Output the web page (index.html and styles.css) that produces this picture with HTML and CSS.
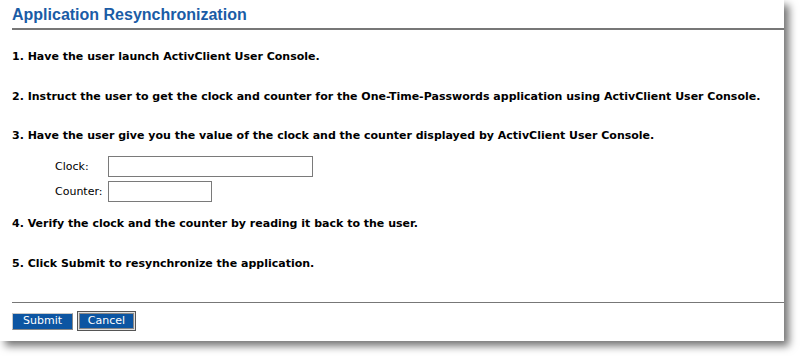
FILE: index.html
```html
<!DOCTYPE html>
<html>
<head>
<meta charset="utf-8">
<link rel="stylesheet" href="styles.css">
</head>
<body>
<div class="panel">
  <h1 class="title">Application Resynchronization</h1>
  <div class="content">
    <p class="step s1">1. Have the user launch ActivClient User Console.</p>
    <p class="step s2">2. Instruct the user to get the clock and counter for the One-Time-Passwords application using ActivClient User Console.</p>
    <p class="step s3">3. Have the user give you the value of the clock and the counter displayed by ActivClient User Console.</p>
    <div class="fields">
      <div class="row"><label class="lbl">Clock:</label><input class="inp clock" type="text"></div>
      <div class="row"><label class="lbl">Counter:</label><input class="inp counter" type="text"></div>
    </div>
    <p class="step s4">4. Verify the clock and the counter by reading it back to the user.</p>
    <p class="step s5">5. Click Submit to resynchronize the application.</p>
  </div>
  <div class="actions">
    <button class="btn submit">Submit</button>
    <button class="btn cancel">Cancel</button>
  </div>
</div>
</body>
</html>
```
FILE: styles.css
```css
html, body {
  margin: 0;
  padding: 0;
  background: #ffffff;
}
body {
  width: 800px;
  height: 356px;
  overflow: hidden;
  font-family: "DejaVu Sans", Verdana, sans-serif;
}
.panel {
  width: 772px;
  height: 341px;
  padding-left: 12px;
  background: #ffffff;
  box-shadow: 5px 5px 8px rgba(0, 0, 0, 0.55);
  display: flex;
  flex-direction: column;
}
.title {
  margin: 0;
  padding-top: 6px;
  height: 22px;
  font-family: "Liberation Sans", Arial, sans-serif;
  font-size: 16px;
  font-weight: bold;
  color: #1a5ca6;
  border-bottom: 2px solid #777777;
}
.content {
  display: flex;
  flex-direction: column;
  height: 272px;
  border-bottom: 1px solid #777777;
}
.step {
  margin: 0;
  font-size: 11px;
  font-weight: bold;
  color: #000000;
  line-height: 14px;
}
.s1 { margin-top: 20px; }
.s2 { margin-top: 26px; }
.s3 { margin-top: 25px; }
.s4 { margin-top: 15px; }
.s5 { margin-top: 26px; }
.fields {
  margin-top: 13px;
  padding-left: 43px;
  display: flex;
  flex-direction: column;
  gap: 4px;
}
.row {
  display: flex;
  align-items: center;
}
.lbl {
  width: 53px;
  font-size: 11px;
  color: #000000;
}
.inp {
  box-sizing: border-box;
  height: 21px;
  margin: 0;
  padding: 0;
  border: 1px solid #7a7a7a;
  background: #ffffff;
}
.clock { width: 205px; }
.counter { width: 104px; }
.actions {
  display: flex;
  align-items: center;
  gap: 4px;
  padding-top: 8px;
}
.btn {
  box-sizing: border-box;
  margin: 0;
  font-family: "DejaVu Sans", Verdana, sans-serif;
  font-size: 11px;
  color: #ffffff;
  background: #0c55a2;
  height: 17px;
  padding: 0;
  line-height: 14px;
}
.submit {
  width: 61px;
  border: 1px solid #c8c8c8;
  border-right-color: #8a8a8a;
  border-bottom-color: #8a8a8a;
}
.cancel {
  width: 59px;
  height: 20px;
  border: 1px solid #555555;
  box-shadow: inset 0 0 0 1px #e0e0e0, inset 0 0 0 2px #888888;
}
```
